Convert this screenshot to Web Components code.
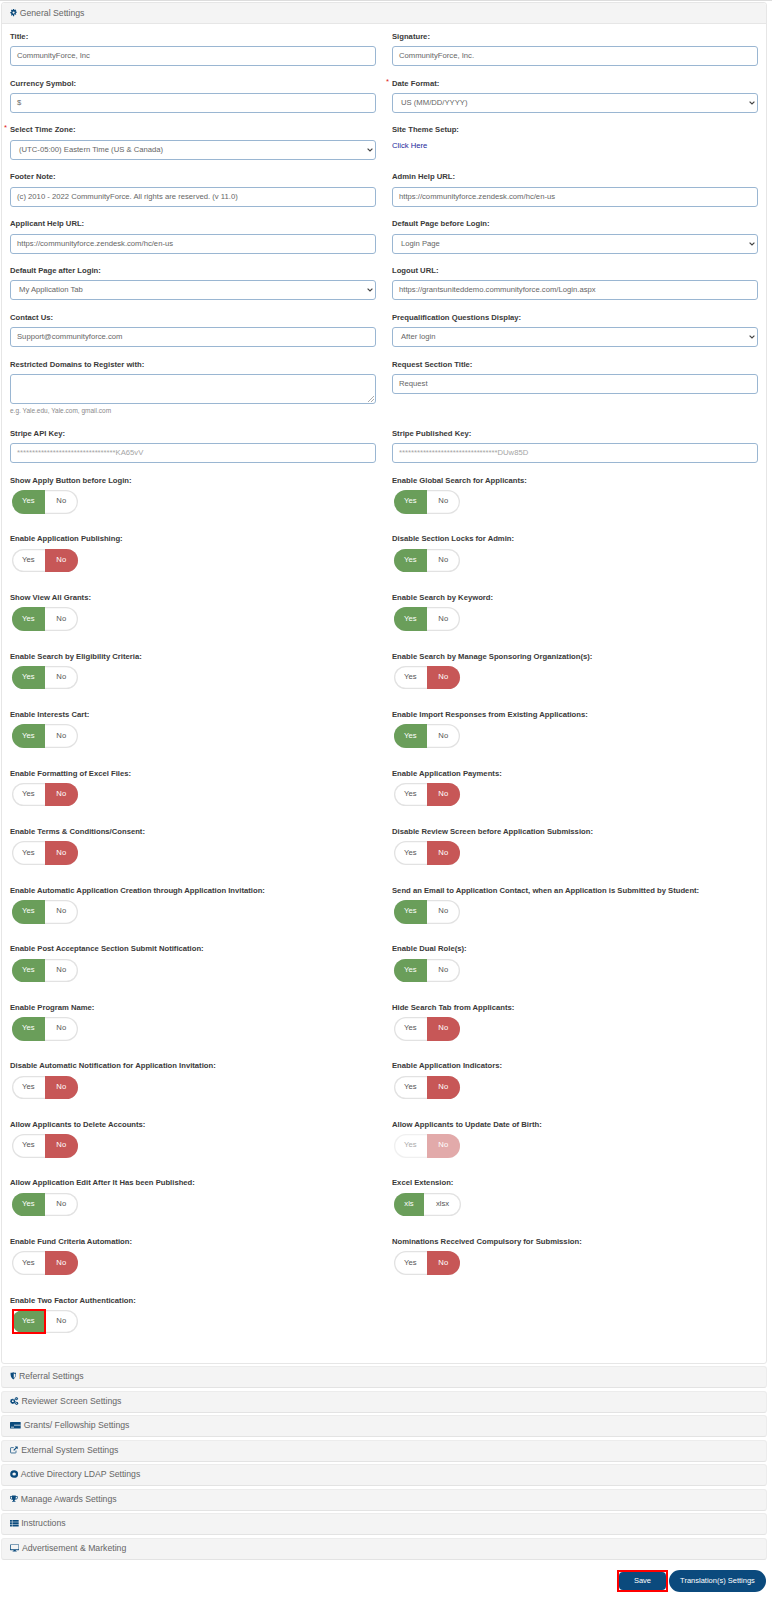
<!DOCTYPE html>
<html><head><meta charset="utf-8"><title>General Settings</title>
<style>
html,body{margin:0;padding:0;background:#fff}
body{font-family:"Liberation Sans",Arial,sans-serif;width:772px;height:1600px;overflow:hidden}
</style></head><body>
<settings-page></settings-page>
<script>
const ICONS={
gear:['0 0 14 14',7.200,7.200,'<path fill-rule="evenodd" d="M6 0h2l.3 1.700 1 .4L10.800 1l1.400 1.400-1.100 1.500.4 1 1.800.3v2l-1.800.3-.4 1 1.100 1.500-1.400 1.400-1.500-1.100-1 .4L8 14H6l-.3-1.700-1-.4-1.500 1.100-1.400-1.400 1.100-1.500-.4-1L.7 8V6l1.800-.3.4-1-1.100-1.500L3.200 1l1.500 1.100 1-.4zM7 4.800a2.200 2.200 0 1 0 0 4.400 2.200 2.200 0 0 0 0-4.400z"/>',2.500],
shield:['0 0 13 14',6.500,8,'<path fill-rule="evenodd" d="M1 1.500C3.500 1.500 5 1 6.500.5 8 1 9.500 1.500 12 1.500c0 5-.5 9-5.500 11.500C1.500 10.500 1 6.500 1 1.500zM7.500 2.600V11c2.500-1.800 3.200-4.300 3.300-7.500-1.300 0-2.300-.4-3.300-.9z"/>',2.500],
cogs:['0 0 15 15',8.500,7.800,'<path fill-rule="evenodd" d="M4.200 3.500h1.600l.3 1.200.8.3 1.100-.6 1.100 1.100-.6 1.100.3.800 1.200.3v1.600l-1.200.3-.3.800.6 1.100-1.100 1.100-1.100-.6-.8.3-.3 1.200H4.200l-.3-1.200-.8-.3-1.100.6L.9 11l.6-1.100-.3-.8L0 8.800V7.200l1.200-.3.300-.8-.6-1.100L2 3.900l1.100.6.8-.3zM5 6.300a1.700 1.700 0 1 0 0 3.400 1.700 1.700 0 0 0 0-3.400z"/><path fill-rule="evenodd" d="M11 0l.8.100.2.8.5.2.7-.3.6.6-.4.7.2.5.8.2v.9l-.8.2-.2.5.4.7-.6.6-.7-.3-.5.2-.2.8h-.9l-.2-.8-.5-.2-.7.3-.6-.6.4-.7-.2-.5-.8-.2v-.9l.8-.2.2-.5-.4-.7.6-.6.7.3.500-.2zM11 2.300a.9.9 0 1 0 .01 0z"/><path fill-rule="evenodd" d="M11.500 9l.8.100.2.7.5.2.7-.3.6.6-.4.7.2.5.8.2v.9l-.8.2-.2.5.4.7-.6.6-.7-.3-.5.2-.2.8h-.9l-.2-.8-.5-.2-.7.3-.6-.6.4-.7-.2-.5-.8-.2v-.9l.8-.2.2-.5-.4-.7.6-.6.7.3.500-.2zM11.500 11.300a.9.9 0 1 0 .01 0z"/>',3],
card:['0 0 16 10',10.700,6.500,'<rect width="16" height="10" rx=".8"/><path d="M6 4.200h10v1.300H6zM1.500 7.300h4.500v1H1.500z" fill="#f4f4f4"/>',3],
ext:['0 0 14 14',8,8,'<path fill="none" stroke="currentColor" stroke-width="1.300" d="M10.500 8v3.200a1 1 0 0 1-1 1H2a1 1 0 0 1-1-1V3.800a1 1 0 0 1 1-1h4.500"/><path d="M8.500.7H13.500V5.700L11.700 4 7.200 8.500 5.700 7 10.200 2.500z"/>',3.300],
ring:['0 0 14 14',8.300,8,'<path fill-rule="evenodd" d="M7 .3a6.700 6.700 0 1 1 0 13.400A6.700 6.700 0 0 1 7 .3zM7 4.200a3 2.800 0 1 0 0 5.600 3 2.800 0 0 0 0-5.600z"/>',2.400],
trophy:['0 0 14 13',7.700,7.100,'<path fill-rule="evenodd" d="M3.500 1h7v1.500H14V5c0 1.800-1.700 3.200-4 3.400-.5.500-1 .9-1.500 1.100V11H10v1.500H4V11h1.500V9.500C5 9.300 4.500 8.900 4 8.400 1.700 8.200 0 6.800 0 5V2.500h3.500zM1.300 3.700V5c0 .9.900 1.700 2.500 2-.2-.9-.3-2-.3-3.300zM12.700 3.700h-2.200c0 1.300-.1 2.400-.3 3.300 1.600-.3 2.500-1.100 2.500-2z"/>',3],
list:['0 0 15 11',8.700,6.500,'<path d="M0 0h3.300v3H0zM4.200 0H15v3H4.200zM0 4h3.300v3H0zM4.200 4H15v3H4.200zM0 8h3.300v3H0zM4.200 8H15v3H4.200z"/>',2.500],
desk:['0 0 16 15',9.300,7.800,'<path fill-rule="evenodd" d="M1 .8h14a1 1 0 0 1 1 1v9a1 1 0 0 1-1 1H9.800l.4 1.700h1.300v.9h-7v-.9h1.300l.4-1.700H1a1 1 0 0 1-1-1v-9a1 1 0 0 1 1-1zM1.300 2.100v8h13.400v-8z"/>',2.700]
};
const esc=s=>String(s).replace(/&/g,'&amp;').replace(/</g,'&lt;').replace(/"/g,'&quot;');
function def(name,css,render){customElements.define(name,class extends HTMLElement{
 constructor(){super();this.attachShadow({mode:'open'});}
 connectedCallback(){this.shadowRoot.innerHTML='<style>'+css+'</style>'+render(this);}
});}
def('sf-icon',':host{display:inline-flex;color:#0a4a7c}svg{display:block;fill:currentColor}',e=>{
 const [vb,w,h,p,gap]=ICONS[e.getAttribute('name')];
 return `<svg width="${w}" height="${h}" viewBox="${vb}" preserveAspectRatio="none" style="margin-right:${gap}px" aria-hidden="true">${p}</svg>`;});
def('sf-label',':host{display:block;font:700 7.680px/12px "Liberation Sans",Arial,sans-serif;color:#3a3a3a;height:12px;position:relative;white-space:nowrap} i{position:absolute;left:-6px;top:-2px;color:#e0201c;font:400 7.680px/12px "Liberation Sans",sans-serif}',e=>
 (e.hasAttribute('req')?'<i>*</i>':'')+'<slot></slot>');
def('sf-input',':host{display:block;box-sizing:border-box;height:20px;border:1px solid #9ab6d2;border-radius:3px;background:#fff;font:400 7.680px/18px "Liberation Sans",Arial,sans-serif;color:#666;padding:0 6px;white-space:nowrap;overflow:hidden}:host([muted]){color:#a5a5a5}',e=>'<slot></slot>');
def('sf-select',':host{display:flex;align-items:center;justify-content:space-between;box-sizing:border-box;height:20px;border:1px solid #9ab6d2;border-radius:3px;background:#fff;font:400 7.680px/18px "Liberation Sans",Arial,sans-serif;color:#666;padding:0 2.500px 0 8px;white-space:nowrap}svg{display:block}',e=>'<span><slot></slot></span><svg width="6" height="4" viewBox="0 0 6 4"><path d="M.6.6L3 3 5.400.6" fill="none" stroke="#444" stroke-width="1.200"/></svg>');
def('sf-textarea',':host{display:block;position:relative;box-sizing:border-box;height:30px;border:1px solid #9ab6d2;border-radius:3px;background:#fff}svg{position:absolute;right:1px;bottom:1px}',e=>'<svg width="6" height="6" viewBox="0 0 6 6"><path d="M0 6L6 0M3 6L6 3" stroke="#888" stroke-width=".7"/></svg>');
def('sf-toggle',`:host{display:inline-flex;box-sizing:border-box;height:23.500px;width:66px;border-radius:12px;background:#fff;box-shadow:inset 0 0 0 1.300px #e2e2e2;font:400 7.680px/22px "Liberation Sans",Arial,sans-serif;color:#555;vertical-align:top}
.a,.b{display:flex;align-items:center;justify-content:center;height:100%;box-sizing:border-box;padding-bottom:1px}
.a{width:32.500px;border-radius:12px 0 0 12px}.b{width:33.500px;border-radius:0 12px 12px 0}
.g{background:#6a9e5a;color:#fff}.r{background:#c75757;color:#fff}
:host([off]){opacity:.5}
:host([wide]) .a{width:30px}:host([wide]) .b{width:37px}:host([wide]){width:67px}`,
 e=>{const on=e.getAttribute('on')==='a';
 return `<div class="a ${on?'g':''}">${esc(e.getAttribute('a')||'Yes')}</div><div class="b ${!on?'r':''}">${esc(e.getAttribute('b')||'No')}</div>`;});
def('sf-head',':host{display:flex;align-items:center;box-sizing:border-box;height:22px;background:#f4f4f4;border:1px solid #ececec;border-bottom:1px solid #e3e3e3;border-radius:3px;padding:0 0 var(--head-pb,0) 8px;font:400 8.700px/20px "Liberation Sans",Arial,sans-serif;color:#666;white-space:nowrap}',e=>`<slot name="i"></slot><slot></slot>`);
def('sf-field',':host{display:block;min-width:0}.c{margin-top:3.300px;padding-left:var(--ctl-indent,0)}',e=>'<sf-label '+(e.hasAttribute('req')?'req':'')+'>'+esc(e.getAttribute('label'))+'</sf-label><div class="c"><slot></slot></div>');
def('sf-actions',`:host{display:flex;justify-content:flex-end;gap:1px;padding-right:1px;font:400 7.500px/18px "Liberation Sans",Arial,sans-serif}
.box{box-sizing:border-box;width:51px;height:22.500px;border:2px solid #f00;background:#fff;display:flex}
button{box-sizing:border-box;border:0;background:#0b4a7d;color:#fff;font:inherit;padding:0;white-space:nowrap}
.s{width:100%;height:100%;border-radius:4px}.t{width:97px;height:22.500px;border-radius:11px}`,
 e=>'<div class="box"><button class="s">Save</button></div><button class="t">Translation(s) Settings</button>');

const F=[
 [['Title:','i','CommunityForce, Inc'],['Signature:','i','CommunityForce, Inc.']],
 [['Currency Symbol:','i','$'],['*Date Format:','s','US (MM/DD/YYYY)']],
 [['*Select Time Zone:','s','(UTC-05:00) Eastern Time (US & Canada)'],['Site Theme Setup:','l','Click Here']],
 [['Footer Note:','i','(c) 2010 - 2022 CommunityForce. All rights are reserved. (v 11.0)'],['Admin Help URL:','i','https://communityforce.zendesk.com/hc/en-us']],
 [['Applicant Help URL:','i','https://communityforce.zendesk.com/hc/en-us'],['Default Page before Login:','s','Login Page']],
 [['Default Page after Login:','s','My Application Tab'],['Logout URL:','i','https://grantsuniteddemo.communityforce.com/Login.aspx']],
 [['Contact Us:','i','Support@communityforce.com'],['Prequalification Questions Display:','s','After login']],
];
const T=[
 ['Show Apply Button before Login:','a','Enable Global Search for Applicants:','a'],
 ['Enable Application Publishing:','b','Disable Section Locks for Admin:','a'],
 ['Show View All Grants:','a','Enable Search by Keyword:','a'],
 ['Enable Search by Eligibility Criteria:','a','Enable Search by Manage Sponsoring Organization(s):','b'],
 ['Enable Interests Cart:','a','Enable Import Responses from Existing Applications:','a'],
 ['Enable Formatting of Excel Files:','b','Enable Application Payments:','b'],
 ['Enable Terms & Conditions/Consent:','b','Disable Review Screen before Application Submission:','b'],
 ['Enable Automatic Application Creation through Application Invitation:','a','Send an Email to Application Contact, when an Application is Submitted by Student:','a'],
 ['Enable Post Acceptance Section Submit Notification:','a','Enable Dual Role(s):','a'],
 ['Enable Program Name:','a','Hide Search Tab from Applicants:','b'],
 ['Disable Automatic Notification for Application Invitation:','b','Enable Application Indicators:','b'],
 ['Allow Applicants to Delete Accounts:','b','Allow Applicants to Update Date of Birth:','b!'],
 ['Allow Application Edit After It Has been Published:','a','Excel Extension:','x'],
 ['Enable Fund Criteria Automation:','b','Nominations Received Compulsory for Submission:','b'],
 ['Enable Two Factor Authentication:','h',null,null],
];
const A=[['shield','Referral Settings'],['cogs','Reviewer Screen Settings'],['card','Grants/ Fellowship Settings'],['ext','External System Settings'],['ring','Active Directory LDAP Settings'],['trophy','Manage Awards Settings'],['list','Instructions'],['desk','Advertisement & Marketing']];
function ctl(k,v){
 if(k==='i')return `<sf-input>${esc(v)}</sf-input>`;
 if(k==='s')return `<sf-select>${esc(v)}</sf-select>`;
 if(k==='l')return `<a class="lnk">${esc(v)}</a>`;
}
function field([l,k,v]){const r=l[0]==='*';return `<sf-field label="${esc(r?l.slice(1):l)}" ${r?'req':''}>${ctl(k,v)}</sf-field>`;}
function tog(l,s){ if(!l)return '<div></div>';
 let c;
 if(s==='a')c='<sf-toggle on="a"></sf-toggle>';
 if(s==='b')c='<sf-toggle on="b"></sf-toggle>';
 if(s==='b!')c='<sf-toggle on="b" off></sf-toggle>';
 if(s==='x')c='<sf-toggle on="a" wide a="xls" b="xlsx"></sf-toggle>';
 if(s==='h')c='<span class="hl"><sf-toggle on="a"></sf-toggle><span class="box"></span></span>';
 return `<sf-field label="${esc(l)}" style="--ctl-indent:2px">${c}</sf-field>`;}
customElements.define('settings-page',class extends HTMLElement{
 constructor(){super();this.attachShadow({mode:'open'});}
 connectedCallback(){
 this.shadowRoot.innerHTML=`<style>
 :host{display:block;width:772px;height:1600px;box-sizing:border-box;padding:1px 5px 0 1px;border-top:1px solid #ddd;font-family:"Liberation Sans",Arial,sans-serif}
 .panel{border:1px solid #e6e6e6;border-radius:3px;height:1361.500px;box-sizing:border-box;margin-bottom:2.500px}
 .panel>sf-head{border:0;border-bottom:1px solid #e6e6e6;height:21px;border-radius:3px 3px 0 0}
 .body{padding:6.700px 8px 0 8px}
 .grid{display:grid;grid-template-columns:366px 366px;column-gap:16px}
 .g1{grid-auto-rows:46.900px}
 .row-ta{height:68.700px}
 .row-st{height:47.300px}
 .g2{grid-auto-rows:58.550px}
 .lnk{display:block;font:400 7.680px/12px "Liberation Sans",Arial,sans-serif;color:#23279a;margin-top:3px}
 .hint{font:400 6.500px/10px "Liberation Sans",Arial,sans-serif;color:#8a8a8a;margin-top:2px}
 .hl{display:inline-block;position:relative;height:23.500px;vertical-align:top}
 .box{position:absolute;left:0;top:-1px;width:34px;height:25px;border:2px solid #f00;box-sizing:border-box}
 .acc{display:flex;flex-direction:column;gap:2.500px;--head-pb:1.500px}
 sf-actions{margin-top:10px}
 </style>
 <div class="panel"><sf-head><sf-icon slot="i" name="gear"></sf-icon>General Settings</sf-head>
 <div class="body">
  <div class="grid g1">${F.map(r=>field(r[0])+field(r[1])).join('')}</div>
  <div class="grid row-ta">
   <sf-field label="Restricted Domains to Register with:"><sf-textarea></sf-textarea><div class="hint">e.g. Yale.edu, Yale.com, gmail.com</div></sf-field>
   <sf-field label="Request Section Title:"><sf-input>Request</sf-input></sf-field>
  </div>
  <div class="grid row-st">
   <sf-field label="Stripe API Key:"><sf-input muted>*********************************KA65vV</sf-input></sf-field>
   <sf-field label="Stripe Published Key:"><sf-input muted>*********************************DUw85D</sf-input></sf-field>
  </div>
  <div class="grid g2">${T.map(r=>tog(r[0],r[1])+tog(r[2],r[3])).join('')}</div>
 </div></div>
 <div class="acc">${A.map(([i,t])=>`<sf-head><sf-icon slot="i" name="${i}"></sf-icon>${esc(t)}</sf-head>`).join('')}</div>
 <sf-actions></sf-actions>`;
 }
});
</script>
</body></html>
